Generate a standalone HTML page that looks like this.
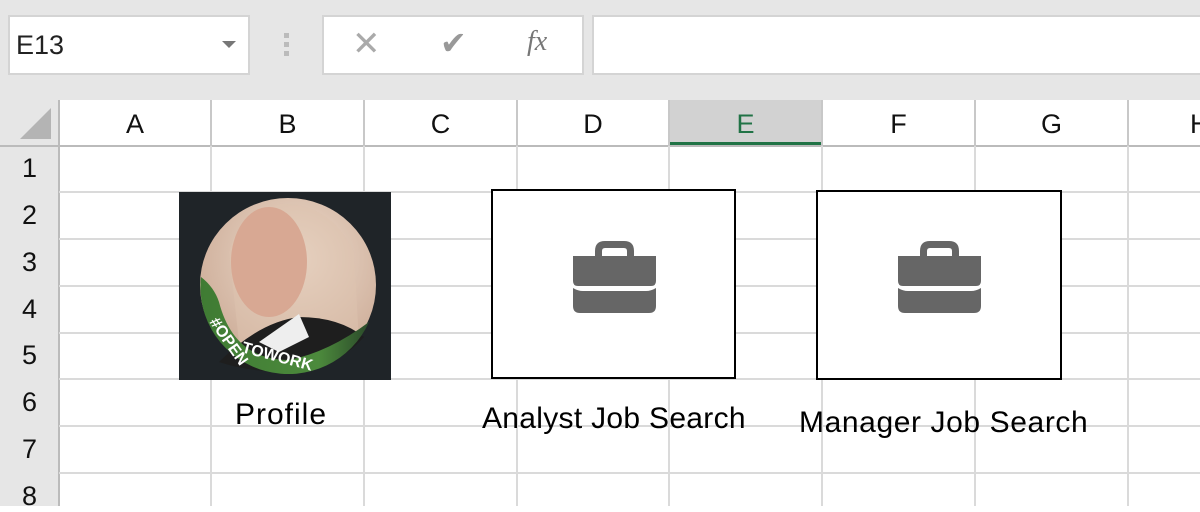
<!DOCTYPE html><html><head><style>
body{margin:0;width:1200px;height:506px;overflow:hidden;background:#fff;font-family:"Liberation Sans",sans-serif;position:relative}
div{position:absolute;box-sizing:border-box}
.hl{height:2px;background:#dadada;left:59px;width:1141px}
.vl{width:2px;background:#dadada;top:146px;height:360px}
.ch{top:100px;height:46px;font-size:27px;text-align:center;line-height:48px;color:#111}
.rh{left:0;width:59px;font-size:27px;text-align:center;color:#111}
.hs{width:2px;background:#c8c8c8;top:100px;height:46px}
.t{font-size:30px;color:#000;white-space:nowrap}
</style></head><body>
<div style="left:0;top:0;width:1200px;height:100px;background:#e6e6e6"></div>
<div style="left:8px;top:15px;width:242px;height:60px;background:#fff;border:2px solid #d4d4d4;font-size:27px;line-height:56px;padding-left:6px;color:#222">E13</div>
<div style="left:222px;top:41px;width:0;height:0;border-left:7px solid transparent;border-right:7px solid transparent;border-top:7px solid #777"></div>
<div style="left:284px;top:33px;width:5px;height:5px;background:#bbb"></div>
<div style="left:284px;top:42px;width:5px;height:5px;background:#bbb"></div>
<div style="left:284px;top:51px;width:5px;height:5px;background:#bbb"></div>
<div style="left:322px;top:15px;width:262px;height:60px;background:#fff;border:2px solid #d4d4d4"></div>
<div style="left:352px;top:24px;font-size:34px;color:#aaa">✕</div>
<div style="left:440px;top:24px;font-size:32px;color:#999">✔</div>
<div style="left:527px;top:26px;font-size:28px;color:#777;font-family:'Liberation Serif',serif;font-style:italic">fx</div>
<div style="left:592px;top:15px;width:620px;height:60px;background:#fff;border:2px solid #d4d4d4"></div>
<div style="left:0;top:100px;width:59px;height:406px;background:#e6e6e6"></div>
<div style="left:20px;top:108px;width:0;height:0;border-left:31px solid transparent;border-bottom:31px solid #b4b4b4"></div>
<div style="left:669px;top:100px;width:153px;height:46px;background:#d2d2d2"></div>
<div style="left:669px;top:142px;width:153px;height:4px;background:#217346"></div>
<div style="left:0;top:145px;width:1200px;height:2px;background:#bbb"></div>
<div style="left:58px;top:100px;width:2px;height:406px;background:#bbb"></div>
<div class="hs" style="left:210px"></div><div class="hs" style="left:363px"></div><div class="hs" style="left:516px"></div><div class="hs" style="left:668px"></div><div class="hs" style="left:821px"></div><div class="hs" style="left:974px"></div><div class="hs" style="left:1127px"></div>
<div class="ch" style="left:59px;width:152px">A</div><div class="ch" style="left:211px;width:153px">B</div><div class="ch" style="left:364px;width:153px">C</div><div class="ch" style="left:517px;width:152px">D</div><div class="ch" style="left:669px;width:153px;color:#217346">E</div><div class="ch" style="left:822px;width:153px">F</div><div class="ch" style="left:975px;width:153px">G</div><div class="ch" style="left:1128px;width:153px;text-align:left;padding-left:62px">H</div>
<div class="vl" style="left:210px"></div><div class="vl" style="left:363px"></div><div class="vl" style="left:516px"></div><div class="vl" style="left:668px"></div><div class="vl" style="left:821px"></div><div class="vl" style="left:974px"></div><div class="vl" style="left:1127px"></div>
<div class="hl" style="top:191px"></div><div class="hl" style="top:238px"></div><div class="hl" style="top:285px"></div><div class="hl" style="top:332px"></div><div class="hl" style="top:378px"></div><div class="hl" style="top:425px"></div><div class="hl" style="top:472px"></div>
<div class="rh" style="top:153px">1</div><div class="rh" style="top:200px">2</div><div class="rh" style="top:247px">3</div><div class="rh" style="top:294px">4</div><div class="rh" style="top:340px">5</div><div class="rh" style="top:387px">6</div><div class="rh" style="top:434px">7</div><div class="rh" style="top:481px">8</div>
<div style="left:179px;top:192px;width:212px;height:188px;background:#1f2428">
<svg width="212" height="188" viewBox="0 0 212 188"><defs><radialGradient id="g" cx="0.55" cy="0.35" r="0.7"><stop offset="0" stop-color="#eddccd"/><stop offset="1" stop-color="#c9a792"/></radialGradient><linearGradient id="gr" x1="0" y1="0" x2="1" y2="0"><stop offset="0" stop-color="#3f7b33"/><stop offset="0.7" stop-color="#4c8a3c"/><stop offset="1" stop-color="#2b4a2a"/></linearGradient></defs>
<ellipse cx="109" cy="93" rx="88" ry="87" fill="url(#g)"/>
<path d="M50 60 Q60 20 100 12 Q150 10 175 60 L180 150 L60 150Z" fill="#ddc3b0" opacity="0.5"/>
<ellipse cx="90" cy="70" rx="38" ry="55" fill="#d8a893"/>
<path d="M40 170 Q80 130 120 125 Q160 125 185 145 Q155 178 110 180 Q70 180 40 170Z" fill="#1e1e1e"/>
<path d="M80 150 L120 122 L130 145 L100 160Z" fill="#eee"/>
<path d="M22 85 A88 87 0 0 0 190 130 Q150 160 110 168 Q55 168 40 110 Q35 95 22 85Z" fill="url(#gr)"/>
<path d="M40 110 Q55 168 110 168 Q150 160 190 130" fill="none" stroke="#1b2a1b" stroke-width="0" />
<text x="30" y="130" fill="#fff" font-size="16" font-weight="bold" transform="rotate(55 30 130)">#OPEN</text>
<text x="62" y="160" fill="#fff" font-size="16" font-weight="bold" transform="rotate(15 62 160)">TOWORK</text></svg></div>
<div style="left:491px;top:189px;width:245px;height:190px;border:2px solid #000;background:#fff"></div>
<div style="left:816px;top:190px;width:246px;height:190px;border:2px solid #000;background:#fff"></div>
<svg style="position:absolute;left:573px;top:241px" width="83" height="72" viewBox="0 0 83 72"><path d="M22 15 V10 Q22 0 32 0 H51 Q61 0 61 10 V15 H54 V10 Q54 7 51 7 H32 Q29 7 29 10 V15Z" fill="#666"/><path d="M0 15 H83 V40 Q83 45 78 45 H5 Q0 45 0 40Z" fill="#666"/><path d="M0 47 Q5 50 10 50 H73 Q78 50 83 47 V65 Q83 72 76 72 H7 Q0 72 0 65Z" fill="#666"/></svg>
<svg style="position:absolute;left:898px;top:241px" width="83" height="72" viewBox="0 0 83 72"><path d="M22 15 V10 Q22 0 32 0 H51 Q61 0 61 10 V15 H54 V10 Q54 7 51 7 H32 Q29 7 29 10 V15Z" fill="#666"/><path d="M0 15 H83 V40 Q83 45 78 45 H5 Q0 45 0 40Z" fill="#666"/><path d="M0 47 Q5 50 10 50 H73 Q78 50 83 47 V65 Q83 72 76 72 H7 Q0 72 0 65Z" fill="#666"/></svg>
<div class="t" style="left:235px;top:398px;letter-spacing:1px">Profile</div>
<div class="t" style="left:482px;top:402px;letter-spacing:0.3px">Analyst Job Search</div>
<div class="t" style="left:799px;top:406px;letter-spacing:0.6px">Manager Job Search</div>
</body></html>
